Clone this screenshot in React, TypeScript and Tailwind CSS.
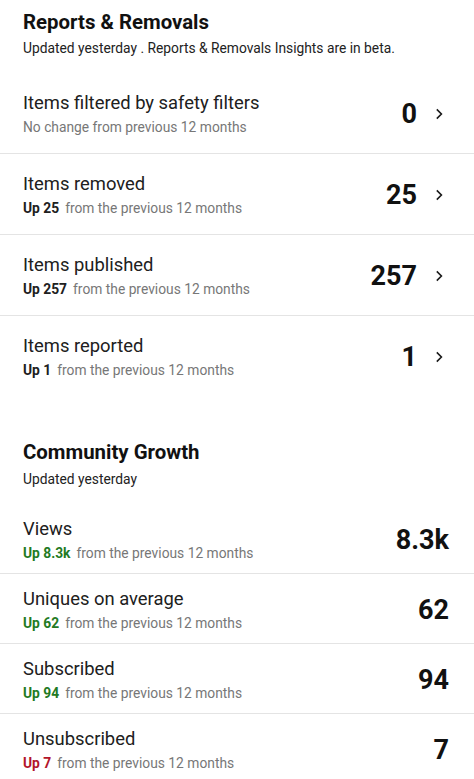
import React from "react";

type Trend = "none" | "neutral" | "good" | "bad";

interface Stat {
  label: string;
  value: string;
  up?: string;
  trend: Trend;
}

const reports: Stat[] = [
  { label: "Items filtered by safety filters", value: "0", trend: "none" },
  { label: "Items removed", value: "25", up: "Up 25", trend: "neutral" },
  { label: "Items published", value: "257", up: "Up 257", trend: "neutral" },
  { label: "Items reported", value: "1", up: "Up 1", trend: "neutral" },
];

const growth: Stat[] = [
  { label: "Views", value: "8.3k", up: "Up 8.3k", trend: "good" },
  { label: "Uniques on average", value: "62", up: "Up 62", trend: "good" },
  { label: "Subscribed", value: "94", up: "Up 94", trend: "good" },
  { label: "Unsubscribed", value: "7", up: "Up 7", trend: "bad" },
];

function Chevron() {
  return (
    <svg width="20" height="20" viewBox="0 0 20 20" className="shrink-0">
      <polyline points="7.8,5.4 12.4,10 7.8,14.6" fill="none" stroke="#1a1a1a" strokeWidth="1.6" />
    </svg>
  );
}

function Subline({ s }: { s: Stat }) {
  if (s.trend === "none") {
    return <div className="text-[13.8px] leading-[20px] text-[#777]">No change from previous 12 months</div>;
  }
  const color = s.trend === "good" ? "text-[#237a23]" : s.trend === "bad" ? "text-[#b3152b]" : "text-[#202020]";
  return (
    <div className="text-[13.8px] leading-[20px] text-[#777]">
      <span className={`font-bold ${color}`}>{s.up}</span>
      <span className="ml-[6px]">from the previous 12 months</span>
    </div>
  );
}

function Row({ s, chevron, last, compact }: { s: Stat; chevron?: boolean; last?: boolean; compact?: boolean }) {
  return (
    <div
      className={`flex items-center pl-[23px] pr-[25px] ${compact ? "pt-[13px] pb-[10px]" : "pt-[18px] pb-[16px]"} ${last ? "" : "border-b border-[#e4e4e4]"}`}
    >
      <div className="flex-1 flex flex-col gap-[2px]">
        <div className="text-[18.4px] leading-[24px] text-[#202020]">{s.label}</div>
        <Subline s={s} />
      </div>
      <div className="text-[27px] font-bold text-[#111] leading-none">{s.value}</div>
      {chevron && <div className="ml-[12px]"><Chevron /></div>}
    </div>
  );
}

export default function App() {
  return (
    <div className="w-[474px] h-[779px] overflow-hidden bg-white" style={{ fontFamily: "Roboto, 'Liberation Sans', sans-serif" }}>
      {/* Reports & Removals */}
      <div className="pt-[10px] pl-[23px] mb-[15px]">
        <h1 className="text-[20.4px] leading-[24px] font-bold text-[#111]">Reports &amp; Removals</h1>
        <p className="mt-[4px] text-[13.8px] leading-[20px] text-[#222]">
          Updated yesterday . Reports &amp; Removals Insights are in beta.
        </p>
      </div>
      {reports.map((s, i) => (
        <Row key={s.label} s={s} chevron last={i === reports.length - 1} />
      ))}

      {/* Community Growth */}
      <div className="mt-[44px] pl-[23px] mb-[15px]">
        <h2 className="text-[20.4px] leading-[24px] font-bold text-[#111]">Community Growth</h2>
        <p className="mt-[5px] text-[13.8px] leading-[20px] text-[#222]">Updated yesterday</p>
      </div>
      {growth.map((s, i) => (
        <Row key={s.label} s={s} compact last={i === growth.length - 1} />
      ))}
    </div>
  );
}
